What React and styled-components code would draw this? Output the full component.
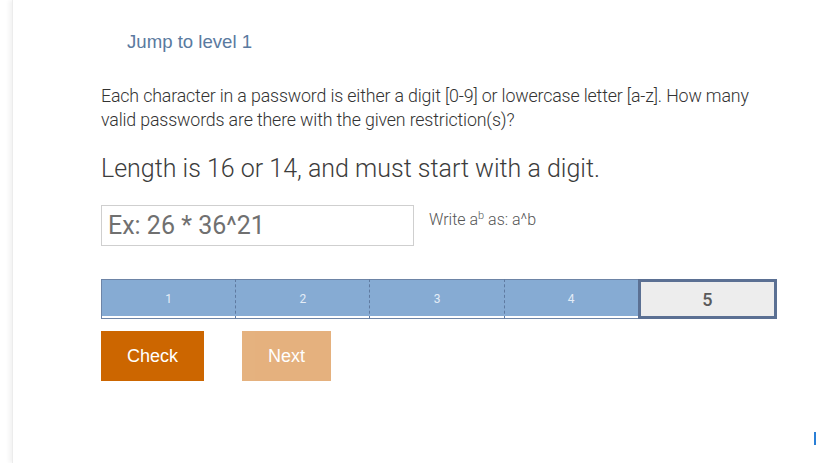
import React from 'react';
import styled, { createGlobalStyle } from 'styled-components';

const GlobalStyle = createGlobalStyle`
  html, body {
    margin: 0;
    padding: 0;
    background: #fff;
  }
  body {
    font-family: Roboto, "Liberation Sans", Arial, sans-serif;
  }
`;

const Page = styled.div`
  position: relative;
  margin-left: 12px;
  height: 463px;
  border-left: 1px solid #ececec;
  box-shadow: -3px 0 4px rgba(0, 0, 0, 0.05);
  padding: 29px 0 0 88px;
  box-sizing: border-box;
  overflow: hidden;
`;

const JumpLink = styled.a`
  display: block;
  margin-left: 26px;
  font-family: "Liberation Sans", Arial, sans-serif;
  font-size: 18.6px;
  line-height: 26px;
  color: #5a7aa0;
  text-decoration: none;
  cursor: pointer;
`;

const Prompt = styled.p`
  margin: 29px 0 0;
  width: 662px;
  font-size: 17.8px;
  font-weight: 300;
  line-height: 24px;
  letter-spacing: -0.15px;
  color: #333;
`;

const Restriction = styled.h2`
  margin: 21px 0 0;
  font-size: 25px;
  font-weight: 300;
  line-height: 32px;
  color: #3c3c3c;
`;

const AnswerRow = styled.div`
  display: flex;
  align-items: flex-start;
  gap: 15px;
  margin-top: 20px;
`;

const AnswerInput = styled.input`
  width: 313px;
  height: 41px;
  box-sizing: border-box;
  border: 1px solid #cfcfcf;
  padding: 0 6px;
  font-family: Roboto, "Liberation Sans", Arial, sans-serif;
  font-size: 25px;
  font-weight: 400;
  color: #333;
  outline: none;
  &::placeholder {
    color: #707070;
  }
`;

const Hint = styled.span`
  margin-top: 5px;
  font-size: 16px;
  font-weight: 300;
  color: #555;
  sup {
    font-size: 11px;
    line-height: 0;
  }
`;

const Levels = styled.div`
  display: flex;
  margin-top: 33px;
  width: 676px;
  height: 40px;
`;

const Level = styled.div`
  flex: 1;
  display: flex;
  align-items: center;
  justify-content: center;
  box-sizing: border-box;
  font-size: ${p => (p.$current ? '18px' : '12px')};
  font-weight: ${p => (p.$current ? 500 : 400)};
  color: ${p => (p.$current ? '#5a5a5a' : '#e4edf7')};
  background: ${p => (p.$current ? '#ededed' : '#86abd3')};
  border: ${p => (p.$current ? '3px solid #5b7093' : '1px solid #6d84a6')};
  border-left: ${p =>
    p.$current ? '3px solid #5b7093' : p.$first ? '1px solid #6d84a6' : '1px dashed #5f7aa0'};
  border-right: ${p => (p.$current ? '3px solid #5b7093' : 'none')};
  box-shadow: ${p => (p.$current ? 'none' : 'inset 0 -2px 0 #fff, inset 0 -3px 0 #86abd3')};
`;

const Buttons = styled.div`
  display: flex;
  gap: 38px;
  margin-top: 12px;
`;

const Button = styled.button`
  height: 50px;
  padding: 0 26px;
  border: none;
  font-family: "Liberation Sans", Arial, sans-serif;
  font-size: 18px;
  color: #fff;
  background: #cc6600;
  opacity: ${p => (p.disabled ? 0.5 : 1)};
  cursor: pointer;
`;

const EdgeMark = styled.div`
  position: absolute;
  right: 0;
  top: 432px;
  width: 2px;
  height: 13px;
  background: #2a7fd6;
`;

export default function App() {
  const levels = [1, 2, 3, 4, 5];
  return (
    <>
      <GlobalStyle />
      <Page>
        <JumpLink>Jump to level 1</JumpLink>
        <Prompt>
          Each character in a password is either a digit [0-9] or lowercase letter [a-z]. How many
          valid passwords are there with the given restriction(s)?
        </Prompt>
        <Restriction>Length is 16 or 14, and must start with a digit.</Restriction>
        <AnswerRow>
          <AnswerInput placeholder="Ex: 26 * 36^21" />
          <Hint>
            Write a<sup>b</sup> as: a^b
          </Hint>
        </AnswerRow>
        <Levels>
          {levels.map(n => (
            <Level key={n} $current={n === 5} $first={n === 1}>
              {n}
            </Level>
          ))}
        </Levels>
        <Buttons>
          <Button>Check</Button>
          <Button disabled>Next</Button>
        </Buttons>
        <EdgeMark />
      </Page>
    </>
  );
}
